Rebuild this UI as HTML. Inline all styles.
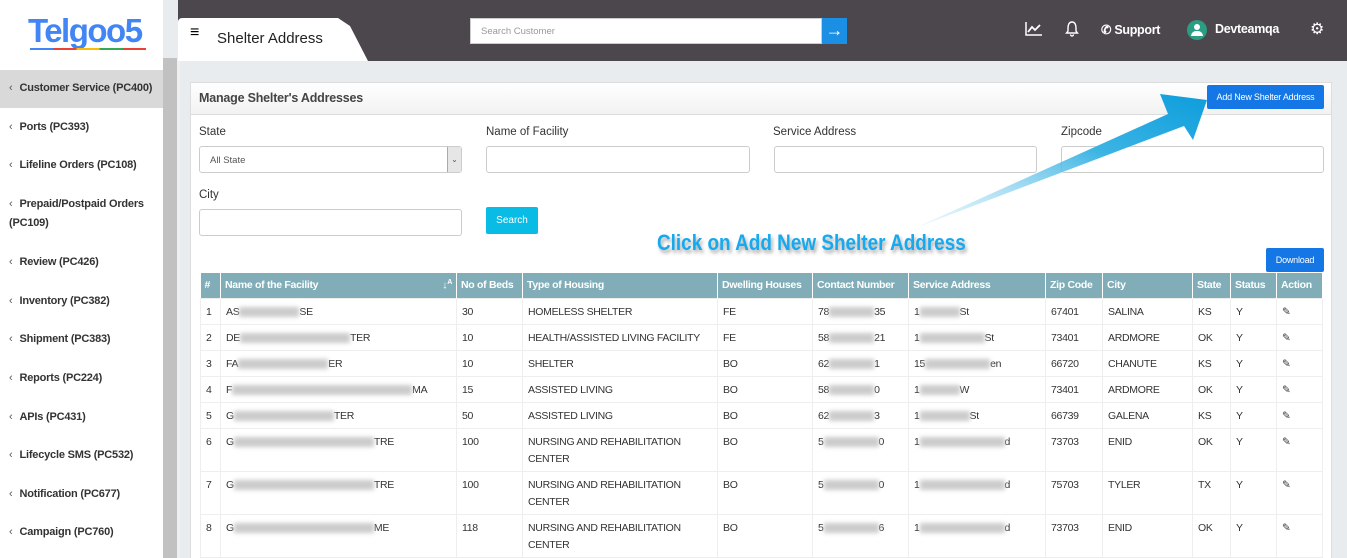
<!DOCTYPE html>
<html><head><style>
*{margin:0;padding:0;box-sizing:border-box}
html,body{width:1347px;height:558px;overflow:hidden}
body{font-family:"Liberation Sans",sans-serif;background:#e9ecef;position:relative}
.abs{position:absolute}
.side{left:0;top:0;width:163px;height:558px;background:#fff}
.logo{left:28px;top:12px;font-size:33px;font-weight:bold;color:#4285f4;letter-spacing:-1.5px}
.menu div{position:absolute;left:0;width:163px;font-size:11px;font-weight:bold;color:#333;padding-left:9px;line-height:19px;letter-spacing:-0.2px;white-space:nowrap}
.menu div b{font-weight:normal;color:#555;margin-right:7px}
.top{left:178px;top:0;width:1169px;height:61px;background:#4c464d}
.tab{left:178px;top:18px;width:190px;height:43px;background:#fff;clip-path:polygon(0 0,160px 0,172px 8px,190px 43px,0 43px);border-radius:4px 0 0 0}
.panel{left:190px;top:82px;width:1142px;height:480px;background:#fff;border:1px solid #ddd}
.ph{left:191px;top:83px;width:1140px;height:32px;background:linear-gradient(#fff,#f2f2f2);border-bottom:1px solid #ddd}
.lbl{font-size:11.5px;color:#333}
.inp{height:27px;border:1px solid #ccc;border-radius:3px;background:#fff}
table{position:absolute;left:200px;top:273px;border-collapse:collapse;font-size:10.5px;color:#333;table-layout:fixed;width:1122px;letter-spacing:-0.3px}
th{background:#81adb8;color:#fff;font-weight:bold;text-align:left;height:25px;padding:0 4px;border-right:1px solid #fff;white-space:nowrap;overflow:hidden}
td{padding:0 5px;border:1px solid #eee;vertical-align:top;padding-top:5px;line-height:17px;overflow:hidden;white-space:nowrap}
td.w{white-space:normal}
.bl{display:inline-block;background:#ccc;filter:blur(2px);height:10px;vertical-align:middle}
.btn{background:#1577e6;color:#fff;font-size:9px;text-align:center;border-radius:2px;white-space:nowrap;letter-spacing:-0.2px}
</style></head><body>
<div class="abs side"></div>
<div class="abs logo">Telgoo5</div>
<div class="abs" style="left:30px;top:48px;width:116px;height:2px;background:linear-gradient(90deg,#4285f4 0 20%,#ea4335 20% 40%,#fbbc05 40% 60%,#34a853 60% 80%,#ea4335 80%)"></div>
<div class="abs" style="left:163px;top:58px;width:14px;height:500px;background:#c1c1c1"></div>
<div class="abs" style="left:177px;top:58px;width:3px;height:500px;background:#f0f0f0"></div>
<div class="abs" style="left:0;top:70px;width:163px;height:38px;background:#d9d9d9"></div>
<div class="menu">
<div style="top:79px"><b>&lsaquo;</b>Customer Service (PC400)</div>
<div style="top:118px"><b>&lsaquo;</b>Ports (PC393)</div>
<div style="top:156px"><b>&lsaquo;</b>Lifeline Orders (PC108)</div>
<div style="top:195px"><b>&lsaquo;</b>Prepaid/Postpaid Orders<br>(PC109)</div>
<div style="top:253px"><b>&lsaquo;</b>Review (PC426)</div>
<div style="top:292px"><b>&lsaquo;</b>Inventory (PC382)</div>
<div style="top:330px"><b>&lsaquo;</b>Shipment (PC383)</div>
<div style="top:369px"><b>&lsaquo;</b>Reports (PC224)</div>
<div style="top:408px"><b>&lsaquo;</b>APIs (PC431)</div>
<div style="top:446px"><b>&lsaquo;</b>Lifecycle SMS (PC532)</div>
<div style="top:485px"><b>&lsaquo;</b>Notification (PC677)</div>
<div style="top:523px"><b>&lsaquo;</b>Campaign (PC760)</div>
</div>
<div class="abs top"></div>
<div class="abs tab"></div>
<div class="abs" style="left:190px;top:24px;font-size:16px;font-weight:bold">&#8801;</div>
<div class="abs" style="left:217px;top:30px;font-size:15px;color:#222">Shelter Address</div>
<div class="abs" style="left:470px;top:18px;width:352px;height:26px;background:#fff;border:1px solid #ccc;font-size:9.5px;color:#999;padding:7px 10px">Search Customer</div>
<div class="abs" style="left:822px;top:18px;width:25px;height:26px;background:#1a8fe3;color:#fff;font-size:18px;text-align:center;line-height:24px">&rarr;</div>
<svg class="abs" style="left:1025px;top:21px" width="18" height="16"><path d="M1 1V14H17" stroke="#fff" stroke-width="1.5" fill="none"/><path d="M3 11L7 6L10 9L15 4" stroke="#fff" stroke-width="1.8" fill="none"/></svg>
<svg class="abs" style="left:1065px;top:20px" width="14" height="17"><path d="M7 2C4 2 3 5 3 8V11L1.5 13H12.5L11 11V8C11 5 10 2 7 2ZM5.5 14.5A1.5 1.5 0 0 0 8.5 14.5" stroke="#fff" stroke-width="1.4" fill="none"/></svg>
<div class="abs" style="left:1101px;top:22px;color:#fff;font-size:12.5px;font-weight:bold;letter-spacing:-0.3px">&#9990; Support</div>
<div class="abs" style="left:1187px;top:20px;width:20px;height:20px;border-radius:50%;background:#2a9d82"><div style="position:absolute;left:7px;top:4px;width:6px;height:6px;border-radius:50%;background:#fff"></div><div style="position:absolute;left:4px;top:11px;width:12px;height:5px;border-radius:5px 5px 0 0;background:#fff"></div></div>
<div class="abs" style="left:1215px;top:22px;color:#fff;font-size:12.5px;font-weight:bold;letter-spacing:-0.3px">Devteamqa</div>
<div class="abs" style="left:1310px;top:19px;color:#fff;font-size:16px">&#9881;</div>
<div class="abs panel"></div>
<div class="abs ph"></div>
<div class="abs" style="left:199px;top:91px;font-size:12.5px;font-weight:bold;color:#444;letter-spacing:-0.2px">Manage Shelter's Addresses</div>
<div class="abs btn" style="left:1207px;top:85px;width:117px;height:24px;line-height:24px">Add New Shelter Address</div>
<div class="abs lbl" style="left:199px;top:126px">State</div>
<div class="abs lbl" style="left:486px;top:126px">Name of Facility</div>
<div class="abs lbl" style="left:773px;top:126px">Service Address</div>
<div class="abs lbl" style="left:1061px;top:126px">Zipcode</div>
<div class="abs inp" style="left:199px;top:146px;width:263px;font-size:9.5px;color:#555;padding:8px 10px">All State<div style="position:absolute;right:0;top:0;width:14px;height:25px;background:#e6e6e6;border-left:1px solid #aaa;font-size:8px;text-align:center;line-height:25px">&#8964;</div></div>
<div class="abs inp" style="left:486px;top:146px;width:264px"></div>
<div class="abs inp" style="left:774px;top:146px;width:263px"></div>
<div class="abs inp" style="left:1061px;top:146px;width:263px"></div>
<div class="abs lbl" style="left:199px;top:189px">City</div>
<div class="abs inp" style="left:199px;top:209px;width:263px"></div>
<div class="abs" style="left:486px;top:207px;width:52px;height:27px;background:#08bce6;color:#fff;font-size:10px;text-align:center;line-height:27px;border-radius:2px">Search</div>
<div class="abs btn" style="left:1266px;top:248px;width:58px;height:24px;line-height:24px">Download</div>
<svg class="abs" style="left:900px;top:80px" width="320" height="160"><defs><linearGradient id="g" x1="0" y1="1" x2="1" y2="0"><stop offset="0" stop-color="#bfe6f5" stop-opacity="0.3"/><stop offset="0.6" stop-color="#3cb4e4"/><stop offset="1" stop-color="#0d9ddc"/></linearGradient></defs><path d="M15 148L268 34L260 14L307 20L293 60L284 46Z" fill="url(#g)"/></svg>
<div class="abs" style="left:657px;top:230px;font-size:22px;font-weight:bold;color:#17a9ee;text-shadow:2px 3px 4px rgba(0,0,0,.35);transform:scaleX(.86);transform-origin:left;white-space:nowrap">Click on Add New Shelter Address</div>
<table>
<colgroup><col style="width:20px"><col style="width:236px"><col style="width:66px"><col style="width:195px"><col style="width:95px"><col style="width:96px"><col style="width:137px"><col style="width:57px"><col style="width:90px"><col style="width:38px"><col style="width:46px"><col style="width:46px"></colgroup>
<tr><th>#</th><th>Name of the Facility<span style="float:right">&darr;<sup style="font-size:7px">A</sup></span></th><th>No of Beds</th><th>Type of Housing</th><th>Dwelling Houses</th><th>Contact Number</th><th>Service Address</th><th>Zip Code</th><th>City</th><th>State</th><th>Status</th><th>Action</th></tr>
<tr style="height:26px"><td>1</td><td>AS<span class="bl" style="width:60px"></span>SE</td><td>30</td><td>HOMELESS SHELTER</td><td>FE</td><td>78<span class="bl" style="width:45px"></span>35</td><td>1<span class="bl" style="width:40px"></span>St</td><td>67401</td><td>SALINA</td><td>KS</td><td>Y</td><td>&#9998;</td></tr>
<tr style="height:26px"><td>2</td><td>DE<span class="bl" style="width:110px"></span>TER</td><td>10</td><td>HEALTH/ASSISTED LIVING FACILITY</td><td>FE</td><td>58<span class="bl" style="width:45px"></span>21</td><td>1<span class="bl" style="width:65px"></span>St</td><td>73401</td><td>ARDMORE</td><td>OK</td><td>Y</td><td>&#9998;</td></tr>
<tr style="height:26px"><td>3</td><td>FA<span class="bl" style="width:90px"></span>ER</td><td>10</td><td>SHELTER</td><td>BO</td><td>62<span class="bl" style="width:45px"></span>1</td><td>15<span class="bl" style="width:65px"></span>en</td><td>66720</td><td>CHANUTE</td><td>KS</td><td>Y</td><td>&#9998;</td></tr>
<tr style="height:26px"><td>4</td><td>F<span class="bl" style="width:180px"></span>MA</td><td>15</td><td>ASSISTED LIVING</td><td>BO</td><td>58<span class="bl" style="width:45px"></span>0</td><td>1<span class="bl" style="width:40px"></span>W</td><td>73401</td><td>ARDMORE</td><td>OK</td><td>Y</td><td>&#9998;</td></tr>
<tr style="height:26px"><td>5</td><td>G<span class="bl" style="width:100px"></span>TER</td><td>50</td><td>ASSISTED LIVING</td><td>BO</td><td>62<span class="bl" style="width:45px"></span>3</td><td>1<span class="bl" style="width:50px"></span>St</td><td>66739</td><td>GALENA</td><td>KS</td><td>Y</td><td>&#9998;</td></tr>
<tr style="height:43px"><td>6</td><td>G<span class="bl" style="width:140px"></span>TRE</td><td>100</td><td class="w">NURSING AND REHABILITATION<br>CENTER</td><td>BO</td><td>5<span class="bl" style="width:55px"></span>0</td><td>1<span class="bl" style="width:85px"></span>d</td><td>73703</td><td>ENID</td><td>OK</td><td>Y</td><td>&#9998;</td></tr>
<tr style="height:43px"><td>7</td><td>G<span class="bl" style="width:140px"></span>TRE</td><td>100</td><td class="w">NURSING AND REHABILITATION<br>CENTER</td><td>BO</td><td>5<span class="bl" style="width:55px"></span>0</td><td>1<span class="bl" style="width:85px"></span>d</td><td>75703</td><td>TYLER</td><td>TX</td><td>Y</td><td>&#9998;</td></tr>
<tr style="height:43px"><td>8</td><td>G<span class="bl" style="width:140px"></span>ME</td><td>118</td><td class="w">NURSING AND REHABILITATION<br>CENTER</td><td>BO</td><td>5<span class="bl" style="width:55px"></span>6</td><td>1<span class="bl" style="width:85px"></span>d</td><td>73703</td><td>ENID</td><td>OK</td><td>Y</td><td>&#9998;</td></tr>
</table>
</body></html>
